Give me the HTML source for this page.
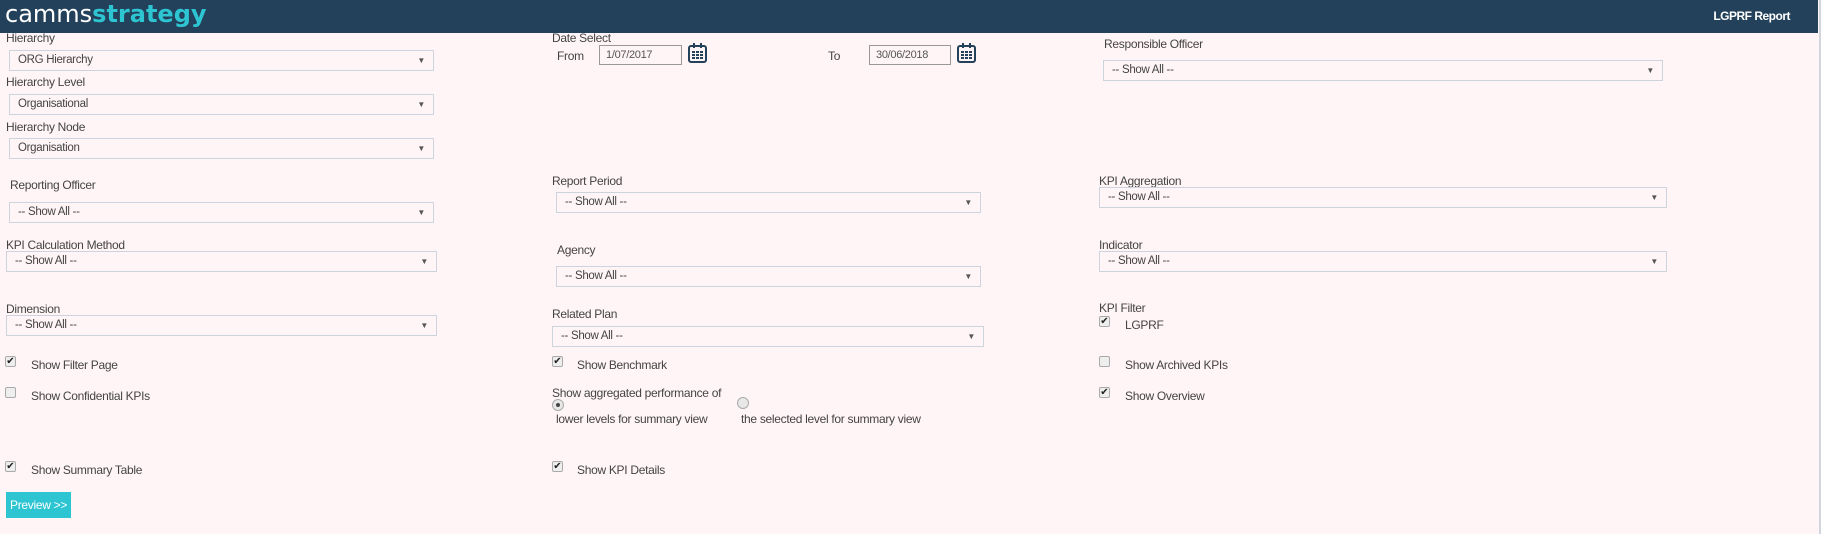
<!DOCTYPE html>
<html><head><meta charset="utf-8">
<style>
*{box-sizing:border-box;margin:0;padding:0}
body{width:1821px;height:534px;background:#fff5f6;font-family:"Liberation Sans",sans-serif;font-size:12px;letter-spacing:-0.3px;color:#444;position:relative;overflow:hidden}
.hdr{position:absolute;left:0;top:0;width:1818px;height:33px;background:#23415a}
.logo{position:absolute;left:5px;top:0px;font-size:24px;color:#fff;letter-spacing:0;font-family:"DejaVu Sans",sans-serif}
.logo b{color:#2ec5d3;font-weight:bold}
.rep{position:absolute;right:28px;top:9px;color:#fff;font-weight:bold;font-size:12px;letter-spacing:-0.5px}
.sb{position:absolute;right:0;top:0;width:2px;height:534px;background:#d0d6dc}
.l{position:absolute;line-height:14px;white-space:nowrap}
.s{position:absolute;height:21px;border:1px solid #ccd3dc;background:#fff5f6;line-height:19px;padding-left:8px;color:#444;font-size:11.5px}
.s:after{content:"\25BC";position:absolute;right:8px;top:0;font-size:8px;color:#555}
.i{position:absolute;height:20px;border:1px solid #999;background:#fff5f6;line-height:18px;padding-left:6px;font-size:11px;color:#555}
.cal{position:absolute;width:19px;height:20px}
.cb{position:absolute;width:11px;height:11px;border:1px solid #aaa;border-radius:2px;background:#eee;font-size:10px;line-height:9px;text-align:center;color:#222;letter-spacing:0}
.rd{position:absolute;width:12px;height:12px;border:1px solid #aaa;border-radius:50%;background:#e8e8e8}
.rd.on:after{content:"";position:absolute;left:3px;top:3px;width:4px;height:4px;border-radius:50%;background:#444}
.btn{position:absolute;left:6px;top:492px;width:65px;height:26px;background:#2ec5d3;color:#fff;line-height:26px;padding-left:4px;font-size:12px}
</style></head><body>
<div class="hdr"><div class="logo">camms<b>strategy</b></div><div class="rep">LGPRF Report</div></div>
<div class="sb"></div>

<div class="l" style="left:6px;top:31px">Hierarchy</div>
<div class="s" style="left:9px;top:50px;width:425px">ORG Hierarchy</div>
<div class="l" style="left:6px;top:75px">Hierarchy Level</div>
<div class="s" style="left:9px;top:94px;width:425px">Organisational</div>
<div class="l" style="left:6px;top:120px">Hierarchy Node</div>
<div class="s" style="left:9px;top:138px;width:425px">Organisation</div>

<div class="l" style="left:552px;top:31px">Date Select</div>
<div class="l" style="left:557px;top:49px">From</div>
<div class="i" style="left:599px;top:45px;width:83px">1/07/2017</div>
<svg class="cal" style="left:688px;top:43px" viewBox="0 0 19 20"><rect x="1" y="3" width="17" height="16" rx="2" fill="none" stroke="#23415a" stroke-width="2"/><rect x="5" y="0" width="2" height="5" fill="#23415a"/><rect x="12" y="0" width="2" height="5" fill="#23415a"/><g fill="#23415a"><rect x="4" y="8" width="3" height="2"/><rect x="8" y="8" width="3" height="2"/><rect x="12" y="8" width="3" height="2"/><rect x="4" y="11" width="3" height="2"/><rect x="8" y="11" width="3" height="2"/><rect x="12" y="11" width="3" height="2"/><rect x="4" y="14" width="3" height="2"/><rect x="8" y="14" width="3" height="2"/><rect x="12" y="14" width="3" height="2"/></g></svg>
<div class="l" style="left:828px;top:49px">To</div>
<div class="i" style="left:869px;top:45px;width:82px">30/06/2018</div>
<svg class="cal" style="left:957px;top:43px" viewBox="0 0 19 20"><rect x="1" y="3" width="17" height="16" rx="2" fill="none" stroke="#23415a" stroke-width="2"/><rect x="5" y="0" width="2" height="5" fill="#23415a"/><rect x="12" y="0" width="2" height="5" fill="#23415a"/><g fill="#23415a"><rect x="4" y="8" width="3" height="2"/><rect x="8" y="8" width="3" height="2"/><rect x="12" y="8" width="3" height="2"/><rect x="4" y="11" width="3" height="2"/><rect x="8" y="11" width="3" height="2"/><rect x="12" y="11" width="3" height="2"/><rect x="4" y="14" width="3" height="2"/><rect x="8" y="14" width="3" height="2"/><rect x="12" y="14" width="3" height="2"/></g></svg>

<div class="l" style="left:1104px;top:37px">Responsible Officer</div>
<div class="s" style="left:1103px;top:60px;width:560px">-- Show All --</div>

<div class="l" style="left:10px;top:178px">Reporting Officer</div>
<div class="s" style="left:9px;top:202px;width:425px">-- Show All --</div>
<div class="l" style="left:552px;top:174px">Report Period</div>
<div class="s" style="left:556px;top:192px;width:425px">-- Show All --</div>
<div class="l" style="left:1099px;top:174px">KPI Aggregation</div>
<div class="s" style="left:1099px;top:187px;width:568px">-- Show All --</div>

<div class="l" style="left:6px;top:238px">KPI Calculation Method</div>
<div class="s" style="left:6px;top:251px;width:431px">-- Show All --</div>
<div class="l" style="left:557px;top:243px">Agency</div>
<div class="s" style="left:556px;top:266px;width:425px">-- Show All --</div>
<div class="l" style="left:1099px;top:238px">Indicator</div>
<div class="s" style="left:1099px;top:251px;width:568px">-- Show All --</div>

<div class="l" style="left:6px;top:302px">Dimension</div>
<div class="s" style="left:6px;top:315px;width:431px">-- Show All --</div>
<div class="l" style="left:552px;top:307px">Related Plan</div>
<div class="s" style="left:552px;top:326px;width:432px">-- Show All --</div>
<div class="l" style="left:1099px;top:301px">KPI Filter</div>
<div class="cb" style="left:1099px;top:316px">✔</div>
<div class="l" style="left:1125px;top:318px">LGPRF</div>

<div class="cb" style="left:5px;top:356px">✔</div><div class="l" style="left:31px;top:358px">Show Filter Page</div>
<div class="cb" style="left:552px;top:356px">✔</div><div class="l" style="left:577px;top:358px">Show Benchmark</div>
<div class="cb" style="left:1099px;top:356px"></div><div class="l" style="left:1125px;top:358px">Show Archived KPIs</div>

<div class="cb" style="left:5px;top:387px"></div><div class="l" style="left:31px;top:389px">Show Confidential KPIs</div>
<div class="l" style="left:552px;top:386px">Show aggregated performance of</div>
<div class="rd on" style="left:552px;top:399px"></div>
<div class="rd" style="left:737px;top:397px"></div>
<div class="l" style="left:556px;top:412px">lower levels for summary view</div>
<div class="l" style="left:741px;top:412px">the selected level for summary view</div>
<div class="cb" style="left:1099px;top:387px">✔</div><div class="l" style="left:1125px;top:389px">Show Overview</div>

<div class="cb" style="left:5px;top:461px">✔</div><div class="l" style="left:31px;top:463px">Show Summary Table</div>
<div class="cb" style="left:552px;top:461px">✔</div><div class="l" style="left:577px;top:463px">Show KPI Details</div>

<div class="btn">Preview &gt;&gt;</div>
</body></html>
